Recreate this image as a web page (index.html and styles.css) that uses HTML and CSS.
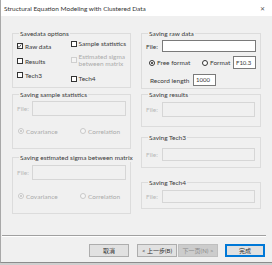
FILE: index.html
```html
<!DOCTYPE html>
<html>
<head>
<meta charset="utf-8">
<link rel="stylesheet" href="styles.css">
</head>
<body>
<div class="window">
  <div class="titlebar">
    <span class="title">Structural Equation Modeling with Clustered Data</span>
    <span class="close">✕</span>
  </div>
  <div class="main">
    <div class="col">
      <fieldset class="grp">
        <legend>Savedata options</legend>
        <div class="gbody b-savedata">
          <div class="optcol optcol-l">
            <label class="chk c-raw"><span class="box"><svg viewBox="0 0 6 6" width="6" height="6"><path d="M1 3.2 L2.5 4.6 L5.1 1.2" fill="none" stroke="#222" stroke-width="0.9"/></svg></span>Raw data</label>
            <label class="chk c-results"><span class="box"></span>Results</label>
            <label class="chk c-tech3"><span class="box"></span>Tech3</label>
          </div>
          <div class="optcol">
            <label class="chk c-sample"><span class="box"></span>Sample statistics</label>
            <label class="chk dis c-est"><span class="box"></span><span class="two">Estimated sigma<br>between matrix</span></label>
            <label class="chk c-tech4"><span class="box"></span>Tech4</label>
          </div>
        </div>
      </fieldset>

      <fieldset class="grp g-sample">
        <legend>Saving sample statistics</legend>
        <div class="gbody b-sample">
          <div class="filerow dis fr-sample"><span class="flabel">File:</span><span class="input dinput h15"></span></div>
          <div class="radiorow dis rr-sample">
            <span class="rad r-cov"><span class="circle on"></span>Covariance</span>
            <span class="rad"><span class="circle"></span>Correlation</span>
          </div>
        </div>
      </fieldset>

      <fieldset class="grp g-est">
        <legend>Saving estimated sigma between matrix</legend>
        <div class="gbody b-est">
          <div class="filerow dis fr-est"><span class="flabel">File:</span><span class="input dinput h15"></span></div>
          <div class="radiorow dis rr-est">
            <span class="rad r-cov"><span class="circle on"></span>Covariance</span>
            <span class="rad"><span class="circle"></span>Correlation</span>
          </div>
        </div>
      </fieldset>
    </div>

    <div class="col">
      <fieldset class="grp">
        <legend>Saving raw data</legend>
        <div class="gbody b-raw">
          <div class="filerow fr-raw"><span class="flabel rl">File:</span><span class="input winput h12"></span></div>
          <div class="fmtrow">
            <span class="rad r-free"><span class="circle on dark"></span>Free format</span>
            <span class="rad r-fmt"><span class="circle dark"></span>Format</span>
            <span class="input winput small f103">F10.3</span>
          </div>
          <div class="reclrow">
            <span class="reclabel">Record length</span>
            <span class="input winput small recl">1000</span>
          </div>
        </div>
      </fieldset>

      <fieldset class="grp g-results">
        <legend>Saving results</legend>
        <div class="gbody b-results">
          <div class="filerow dis fr-results"><span class="flabel rl">File:</span><span class="input dinput h15"></span></div>
        </div>
      </fieldset>

      <fieldset class="grp g-tech3">
        <legend>Saving Tech3</legend>
        <div class="gbody b-tech3">
          <div class="filerow dis fr-tech3"><span class="flabel rl">File:</span><span class="input dinput h13"></span></div>
        </div>
      </fieldset>

      <fieldset class="grp g-tech4">
        <legend>Saving Tech4</legend>
        <div class="gbody b-tech4">
          <div class="filerow dis fr-tech4"><span class="flabel rl">File:</span><span class="input dinput h13"></span></div>
        </div>
      </fieldset>
    </div>
  </div>
  <div class="sep"></div>
  <div class="footer">
    <span class="btn b-cancel">取消</span>
    <span class="btn b-back">&lt; 上一步(B)</span>
    <span class="btn disabled b-next">下一页(N) &gt;</span>
    <span class="btn default b-done">完成</span>
  </div>
</div>
</body>
</html>
```

FILE: styles.css
```css
* { box-sizing: border-box; }
html, body { margin: 0; padding: 0; }
body {
  width: 272px;
  height: 265px;
  overflow: hidden;
  background: #cfcfcf;
  font-family: "Lato", "Noto Sans CJK SC", sans-serif;
  font-size: 6.5px;
  line-height: 9px;
  color: #3a3a3a;
}
.window {
  width: 272px;
  height: 263px;
  background: #f0f0f0;
  border-left: 1px solid #a8a8a8;
  border-bottom: 1px solid #8c8c8c;
  display: flex;
  flex-direction: column;
}
.titlebar {
  height: 16px;
  background: #ffffff;
  display: flex;
  align-items: center;
  justify-content: space-between;
  padding: 0 7px 0 3px;
  flex: none;
}
.title { font-size: 6.5px; color: #333; }
.close { font-size: 6px; color: #555; }

.main {
  height: 219px;
  display: grid;
  grid-template-columns: 119px 120px;
  column-gap: 10px;
  padding: 12.5px 0 0 11px;
  align-items: start;
}
.col { display: flex; flex-direction: column; }

.grp {
  margin: 0;
  padding: 0 4px;
  border: 1px solid #dcdcdc;
  min-width: 0;
}
.grp legend {
  padding: 0 1px;
  margin-left: 2px;
  line-height: 9px;
  white-space: nowrap;
  color: #3a3a3a;
}
.gbody { display: flex; flex-direction: column; }

/* heights of the group bodies */
.b-savedata { height: 49.5px; flex-direction: row; }
.g-sample { margin-top: 1.5px; }
.b-sample { height: 49.5px; }
.g-est { margin-top: 3.5px; }
.b-est { height: 51.5px; }
.b-raw { height: 50.5px; }
.g-results { margin-top: 0.5px; }
.b-results { height: 27.5px; }
.g-tech3 { margin-top: 5.5px; }
.b-tech3 { height: 25.5px; }
.g-tech4 { margin-top: 9.5px; }
.b-tech4 { height: 21.5px; }

/* checkboxes */
.optcol { display: flex; flex-direction: column; }
.optcol-l { width: 54px; }
.chk { display: flex; align-items: center; height: 9px; white-space: nowrap; }
.box {
  width: 6px; height: 6px;
  border: 1px solid #333;
  background: #fff;
  margin-right: 2px;
  display: inline-flex;
  flex: none;
}
.box svg { display: block; margin: -1px 0 0 -1px; }
.chk.dis { color: #ababab; }
.chk.dis .box { border-color: #cfcfcf; background: #f4f4f4; }
.two { line-height: 7.3px; }
.c-raw { margin-top: 4px; }
.c-results { margin-top: 6px; }
.c-tech3 { margin-top: 5px; }
.c-sample { margin-top: 1.5px; }
.c-est { margin-top: 5px; height: 14.6px; }
.c-tech4 { margin-top: 6.5px; }

/* file rows */
.filerow { display: flex; align-items: center; }
.flabel { width: 15px; flex: none; }
.flabel.rl { width: 16px; }
.filerow.dis .flabel { color: #b8b8b8; }
.input {
  flex: 1;
  display: block;
  border: 1px solid #7a7a7a;
  background: #fff;
}
.winput { border-color: #7a7a7a; background: #fff; }
.dinput { border-color: #d6d6d6; background: #f0f0f0; }
.h12 { height: 12px; }
.h13 { height: 13px; }
.h15 { height: 15px; }
.fr-sample { margin-top: 2.5px; }
.fr-est { margin-top: 3.5px; }
.fr-raw { margin-top: 2.5px; }
.fr-results { margin-top: 3.5px; }
.fr-results .input { margin-right: 1px; }
.fr-tech3 { margin-top: 6.5px; }
.fr-tech3 .input { margin-right: 1px; }
.fr-tech4 { margin-top: 3.5px; }
.fr-tech4 .input { margin-right: 1px; }

/* radios */
.radiorow { display: flex; align-items: center; height: 9px; }
.rr-sample { margin-top: 10.5px; }
.rr-est { margin-top: 11.5px; }
.radiorow.dis { color: #ababab; }
.rad { display: flex; align-items: center; white-space: nowrap; }
.circle {
  width: 6px; height: 6px;
  border-radius: 50%;
  border: 1px solid #c8c8c8;
  background: #f6f6f6;
  margin-right: 2px;
  display: inline-flex;
  align-items: center;
  justify-content: center;
  flex: none;
}
.circle.on::after {
  content: "";
  width: 2px; height: 2px;
  border-radius: 50%;
  background: #c0c0c0;
}
.circle.dark { border-color: #333; background: #fff; }
.circle.dark.on::after { background: #222; }
.r-cov { margin-left: 1px; width: 62px; }

.fmtrow { display: flex; align-items: center; margin-top: 4px; height: 13px; }
.r-free { margin-left: 3px; width: 53px; }
.r-fmt { width: 31px; }
.small {
  flex: none;
  height: 13px;
  width: 23px;
  padding-left: 2px;
  line-height: 11px;
  font-size: 6px;
}
.reclrow { display: flex; align-items: center; margin-top: 5px; }
.reclabel { margin-left: 4px; width: 43px; }
.recl { height: 12px; width: 23px; line-height: 10px; }

.sep {
  height: 2px;
  margin: 0 6px 0 1px;
  border-top: 1px solid #a0a0a0;
  border-bottom: 1px solid #ffffff;
  flex: none;
}
.footer {
  display: flex;
  justify-content: flex-end;
  padding: 7px 7px 0 0;
}
.btn {
  width: 40px;
  height: 13px;
  display: flex;
  align-items: center;
  justify-content: center;
  background: #e1e1e1;
  border: 1px solid #adadad;
  font-size: 6px;
  color: #333;
  white-space: nowrap;
}
.b-back { margin-left: 8px; }
.b-next { margin-left: 1px; }
.b-done { margin-left: 7px; }
.btn.disabled { background: #cccccc; border-color: #bfbfbf; color: #8a8a8a; }
.btn.default { border: 1px solid #0078d7; box-shadow: inset 0 0 0 1px #0078d7; }
```
